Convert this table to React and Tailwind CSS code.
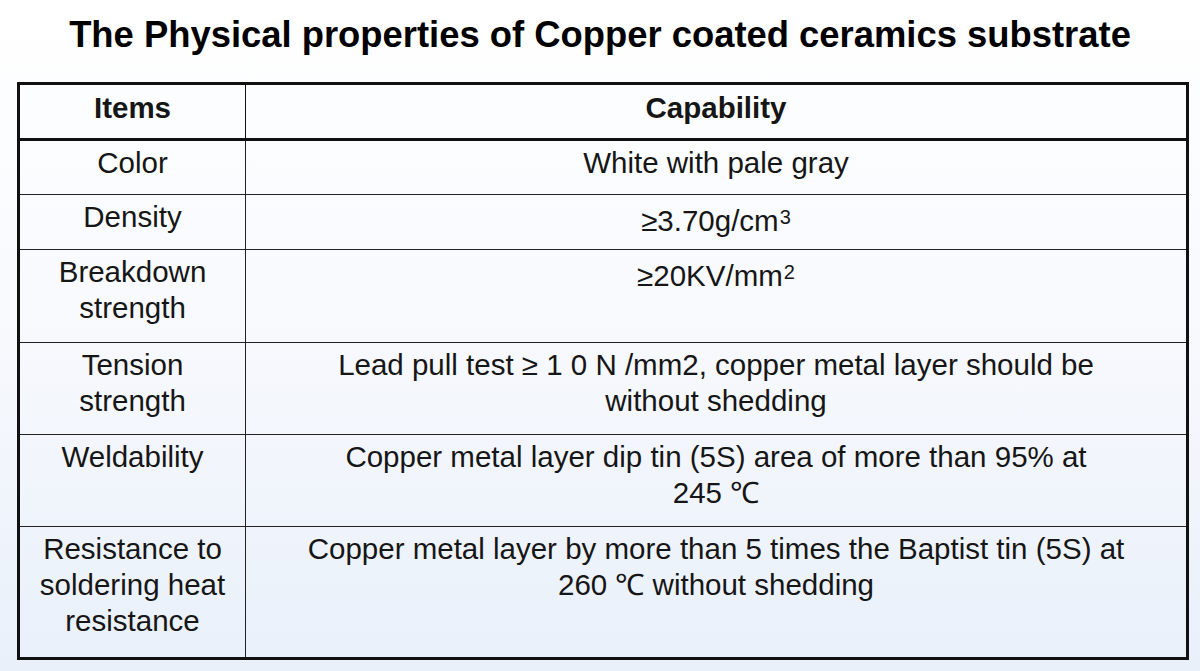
import React from 'react';

const Sup = ({ children }) => <span className="text-[20px] align-[7px] ml-[1px]">{children}</span>;

const rows = [
    { item: ['Color'], cap: ['White with pale gray'], h: 'h-[55px]' },
    { item: ['Density'], cap: [<>≥3.70g/cm<Sup>3</Sup></>], h: 'h-[55px]' },
    { item: ['Breakdown', 'strength'], cap: [<>≥20KV/mm<Sup>2</Sup></>], h: 'h-[93px]' },
    { item: ['Tension', 'strength'], cap: ['Lead pull test ≥ 1 0 N /mm2, copper metal layer should be', 'without shedding'], h: 'h-[92px]' },
    { item: ['Weldability'], cap: ['Copper metal layer dip tin (5S) area of more than 95% at', '245 ℃'], h: 'h-[92px]' },
    { item: ['Resistance to', 'soldering heat', 'resistance'], cap: ['Copper metal layer by more than 5 times the Baptist tin (5S) at', '260 ℃ without shedding'], h: 'h-[132px]' },
];

export default function App() {
    return (
        <div className="w-[1200px] h-[671px] bg-gradient-to-b from-white via-[#f7f9fd] to-[#e9f0fa] font-['Liberation_Sans',Arial,sans-serif] text-[#161616] overflow-hidden">
            <h1 className="text-center text-[36.4px] font-bold text-black leading-none pt-[17px]">
                The Physical properties of Copper coated ceramics substrate
            </h1>

            <table className="mt-[28.6px] ml-[17px] w-[1172px] border-collapse border-[3px] border-[#111] text-[29.5px] leading-[36px] text-center">
                <thead>
                    <tr className="h-[56px]">
                        <th className="w-[227px] border-r-[1.5px] border-b-[3px] border-[#111] font-bold align-top pt-[5px]">Items</th>
                        <th className="border-b-[3px] border-[#111] font-bold align-top pt-[5px]">Capability</th>
                    </tr>
                </thead>
                <tbody>
                    {rows.map((r, i) => (
                        <tr key={i} className={r.h}>
                            <td className="border-r-[1.5px] border-b-[1.5px] border-[#222] align-top pt-[4px]">
                                {r.item.map((t, j) => <div key={j}>{t}</div>)}
                            </td>
                            <td className="border-b-[1.5px] border-[#222] align-top pt-[4px]">
                                {r.cap.map((t, j) => <div key={j}>{t}</div>)}
                            </td>
                        </tr>
                    ))}
                </tbody>
            </table>
        </div>
    );
}
